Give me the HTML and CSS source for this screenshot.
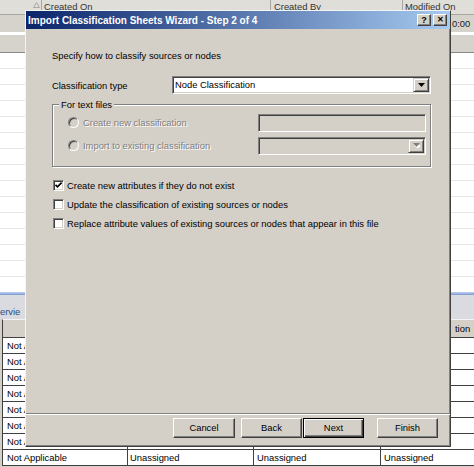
FILE: index.html
```html
<!DOCTYPE html>
<html>
<head>
<meta charset="utf-8">
<title>Import Classification Sheets Wizard</title>
<link rel="stylesheet" href="styles.css">
</head>
<body>
<div class="app">
  <div class="lv">
    <div class="lv-head">
      <div class="hc c0"><svg class="sort" width="7" height="6" viewBox="0 0 7 6"><path d="M3.5 0.5 L6.5 5.5 L0.5 5.5 Z" fill="none" stroke="#a8a8a8"/></svg></div>
      <div class="hc c1">Created On</div>
      <div class="hc c2">Created By</div>
      <div class="hc c3">Modified On</div>
    </div>
    <div class="lv-row r1"><span class="time">0:00</span></div>
    <div class="lv-gap"></div>
    <div class="lv-row r2"></div>
    <div class="lv-body"></div>
  </div>
  <div class="splitter"></div>
  <div class="tabs"><span class="tab">ervie</span></div>
  <div class="grid">
    <div class="ghead">
      <div class="gc g1"></div><div class="gc g2"></div><div class="gc g3"></div><div class="gc g4"><span class="gh-txt">tion</span></div>
    </div>
    <div class="grow"><div class="gc g1">Not Applicable</div><div class="gc g2"></div><div class="gc g3"></div><div class="gc g4"></div></div>
    <div class="grow"><div class="gc g1">Not Applicable</div><div class="gc g2"></div><div class="gc g3"></div><div class="gc g4"></div></div>
    <div class="grow"><div class="gc g1">Not Applicable</div><div class="gc g2"></div><div class="gc g3"></div><div class="gc g4"></div></div>
    <div class="grow"><div class="gc g1">Not Applicable</div><div class="gc g2"></div><div class="gc g3"></div><div class="gc g4"></div></div>
    <div class="grow"><div class="gc g1">Not Applicable</div><div class="gc g2"></div><div class="gc g3"></div><div class="gc g4"></div></div>
    <div class="grow"><div class="gc g1">Not Applicable</div><div class="gc g2"></div><div class="gc g3"></div><div class="gc g4"></div></div>
    <div class="grow"><div class="gc g1">Not Applicable</div><div class="gc g2"></div><div class="gc g3"></div><div class="gc g4"></div></div>
    <div class="grow"><div class="gc g1">Not Applicable</div><div class="gc g2">Unassigned</div><div class="gc g3">Unassigned</div><div class="gc g4">Unassigned</div></div>
  </div>

  <div class="dialog">
    <div class="titlebar">
      <span class="title">Import Classification Sheets Wizard - Step 2 of 4</span>
      <span class="tb-btns"><span class="tb-btn">?</span><span class="tb-btn close">&#x2715;</span></span>
    </div>
    <div class="dlg-body">
      <div class="intro">Specify how to classify sources or nodes</div>
      <div class="type-row">
        <span class="type-label">Classification type</span>
        <div class="combo">
          <span class="combo-text">Node Classification</span>
          <span class="drop"><svg width="7" height="4" viewBox="0 0 7 4"><path d="M0 0 H7 L3.5 4 Z" fill="#000"/></svg></span>
        </div>
      </div>
      <fieldset class="group">
        <legend>For text files</legend>
        <div class="opt-row">
          <span class="radio"></span>
          <span class="dis">Create new classification</span>
          <div class="field disabled"></div>
        </div>
        <div class="opt-row second">
          <span class="radio"></span>
          <span class="dis">Import to existing classification</span>
          <div class="field combo disabled">
            <span class="combo-text"></span>
            <span class="drop"><svg width="7" height="5" viewBox="0 0 7 5"><path d="M1 2 H8 L4.5 6 Z" fill="#fff"/><path d="M0 0 H7 L3.5 4 Z" fill="#808080"/></svg></span>
          </div>
        </div>
      </fieldset>
      <div class="checks">
        <div class="chk-row"><span class="chk"><svg width="9" height="9" viewBox="0 0 9 9"><path d="M1.5 3.8 L3.5 5.8 L7.6 1.7" fill="none" stroke="#000" stroke-width="1.7"/></svg></span><span>Create new attributes if they do not exist</span></div>
        <div class="chk-row"><span class="chk"></span><span>Update the classification of existing sources or nodes</span></div>
        <div class="chk-row"><span class="chk"></span><span>Replace attribute values of existing sources or nodes that appear in this file</span></div>
      </div>
    </div>
    <div class="footer">
      <span class="btn cancel">Cancel</span>
      <span class="btn back">Back</span>
      <span class="btn next default">Next</span>
      <span class="btn finish">Finish</span>
    </div>
  </div>
</div>
</body>
</html>
```

FILE: styles.css
```css
* { box-sizing: border-box; }
html, body { margin: 0; padding: 0; }
body {
  width: 474px;
  height: 467px;
  overflow: hidden;
  font-family: "Liberation Sans", Arial, sans-serif;
  font-size: 9.4px;
  color: #000;
  background: #d4d0c8;
}
.app {
  position: relative;
  width: 474px;
  height: 467px;
  overflow: hidden;
  background: #d4d0c8;
  display: flex;
  flex-direction: column;
}

/* background list view */
.lv { height: 292px; background: #fff; display: flex; flex-direction: column; }
.lv-head {
  display: flex;
  height: 15px;
  background: #e0ded8;
  border-bottom: 1px solid #a9a6a0;
  line-height: 13px;
  color: #333;
}
.hc { border-right: 1px solid #a9a6a0; padding-left: 2px; white-space: nowrap; overflow: hidden; }
.c0 { width: 42px; }
.c1 { width: 229px; }
.c2 { width: 132px; padding-left: 3px; }
.c3 { flex: 1; border-right: none; }
.sort { margin-left: 31px; margin-top: 2px; display: block; }
.lv-row { height: 17px; background: #d6d3cc; flex-shrink: 0; }
.r1 { line-height: 18px; }
.time { display: block; padding-left: 452px; color: #222; }
.lv-gap { height: 3px; background: #fff; flex-shrink: 0; }
.r2 { height: 18px; border-bottom: 1px solid #8c8a85; }
.lv-body {
  flex: 1;
  background: repeating-linear-gradient(to bottom, #fff 0, #fff 15px, #e6e6e6 15px, #e6e6e6 16px);
}
.splitter { height: 3px; background: linear-gradient(to bottom, #c3d3f0, #7b98d2); flex-shrink: 0; }
.tabs { height: 24px; background: #d9dbe0; padding-top: 10px; flex-shrink: 0; }
.tab {
  display: block;
  line-height: 13px;
  color: #2a4a7c;
}

/* background grid */
.grid { display: flex; flex-direction: column; }
.ghead {
  display: flex;
  height: 19px;
  border-top: 1px solid #f4f4f4;
  border-bottom: 1px solid #404040;
  background: #d4d0c8;
  margin-left: 2px;
  border-left: 1px solid #404040;
  line-height: 17px;
}
.grow {
  display: flex;
  height: 16px;
  margin-left: 2px;
  border-left: 1px solid #404040;
  border-bottom: 1px solid #404040;
  background: #fff;
  line-height: 15px;
}
.gc { border-right: 1px solid #404040; padding-left: 3px; white-space: nowrap; overflow: hidden; }
.ghead .gc { border-right-color: #a0a0a0; }
.g1 { width: 125px; padding-left: 4px; }
.g2 { width: 126px; padding-left: 2px; }
.g3 { width: 127px; }
.g4 { flex: 1; border-right: none; }
.gh-txt { display: block; padding-left: 71px; }

/* dialog */
.dialog {
  position: absolute;
  left: 25px;
  top: 10px;
  width: 426px;
  height: 437px;
  background: #d4d0c8;
  border: 1px solid;
  border-color: #f4f4f4 #404040 #404040 #f4f4f4;
  box-shadow: inset -1px -1px 0 #808080;
  display: flex;
  flex-direction: column;
}
.titlebar {
  height: 18px;
  flex-shrink: 0;
  background: linear-gradient(to right, #0a246a, #a6caf0);
  display: flex;
  align-items: center;
  padding: 0 3px 0 2px;
}
.title {
  flex: 1;
  color: #fff;
  font-weight: bold;
  font-size: 10px;
  white-space: nowrap;
}
.tb-btns { display: flex; gap: 2px; }
.tb-btn {
  width: 14px;
  height: 12px;
  background: #d4d0c8;
  border: 1px solid;
  border-color: #fff #404040 #404040 #fff;
  box-shadow: inset -1px -1px 0 #808080;
  font-weight: bold;
  font-size: 9px;
  line-height: 10px;
  text-align: center;
  color: #000;
}
.tb-btn.close { font-size: 8px; }

.dlg-body {
  flex: 1;
  padding: 0 19px 0 26px;
  display: flex;
  flex-direction: column;
}
.intro { margin-top: 20px; line-height: 13px; }
.type-row { margin-top: 14px; display: flex; align-items: center; height: 18px; }
.type-label { width: 120px; }

.combo, .field {
  height: 18px;
  border: 1px solid;
  border-color: #808080 #fff #fff #808080;
  box-shadow: inset 1px 1px 0 #404040, inset -1px -1px 0 #d4d0c8;
  padding: 1px;
  background: #fff;
  display: flex;
  align-items: stretch;
}
.type-row .combo { flex: 1; }
.combo-text { flex: 1; padding-left: 1px; line-height: 14px; }
.drop {
  width: 16px;
  background: #d4d0c8;
  border: 1px solid;
  border-color: #d4d0c8 #404040 #404040 #d4d0c8;
  box-shadow: inset 1px 1px 0 #fff, inset -1px -1px 0 #808080;
  display: flex;
  align-items: center;
  justify-content: center;
}
.drop svg { display: block; }

.group {
  margin: 4px 0 0 0;
  padding: 3px 4px 12px 6px;
  min-width: 0;
  border: 1px solid #808080;
  box-shadow: inset 1px 1px 0 #fff, 1px 1px 0 #fff;
}
.group legend {
  padding: 0 2px;
  line-height: 13px;
  background: #d4d0c8;
}
.opt-row { display: flex; align-items: center; height: 17px; padding-left: 9px; }
.opt-row.second { margin-top: 6px; }
.radio {
  width: 11px;
  height: 11px;
  border-radius: 50%;
  border: 1px solid;
  border-color: #808080 #fff #fff #808080;
  box-shadow: inset 1px 1px 0 #404040;
  background: #d4d0c8;
  margin-right: 4px;
  flex-shrink: 0;
}
.dis { color: #808080; text-shadow: 1px 1px 0 #fff; white-space: nowrap; }
.field.disabled { background: #d4d0c8; width: 168px; margin-left: auto; }

.checks { margin-top: 12px; display: flex; flex-direction: column; gap: 6px; }
.chk-row { display: flex; align-items: center; height: 13px; white-space: nowrap; }
.chk {
  width: 11px;
  height: 11px;
  margin-left: 1px;
  margin-right: 3px;
  background: #fff;
  border: 1px solid;
  border-color: #808080 #fff #fff #808080;
  box-shadow: inset 1px 1px 0 #404040, inset -1px -1px 0 #d4d0c8;
  display: flex;
  align-items: center;
  justify-content: center;
  flex-shrink: 0;
}
.chk svg { display: block; }

.footer {
  flex-shrink: 0;
  border-top: 1px solid #808080;
  box-shadow: inset 0 1px 0 #fff;
  padding: 4px 12px 8px 0;
  display: flex;
  justify-content: flex-end;
}
.btn {
  width: 61px;
  height: 20px;
  line-height: 18px;
  text-align: center;
  background: #d4d0c8;
  border: 1px solid;
  border-color: #fff #404040 #404040 #fff;
  box-shadow: inset -1px -1px 0 #808080;
}
.btn.cancel { width: 62px; }
.btn.back { margin-left: 6px; }
.btn.next { margin-left: 1px; }
.btn.finish { margin-left: 13px; }
.btn.default {
  border-color: #000;
  box-shadow: inset 1px 1px 0 #fff, inset -1px -1px 0 #404040, inset -2px -2px 0 #808080;
}
```
